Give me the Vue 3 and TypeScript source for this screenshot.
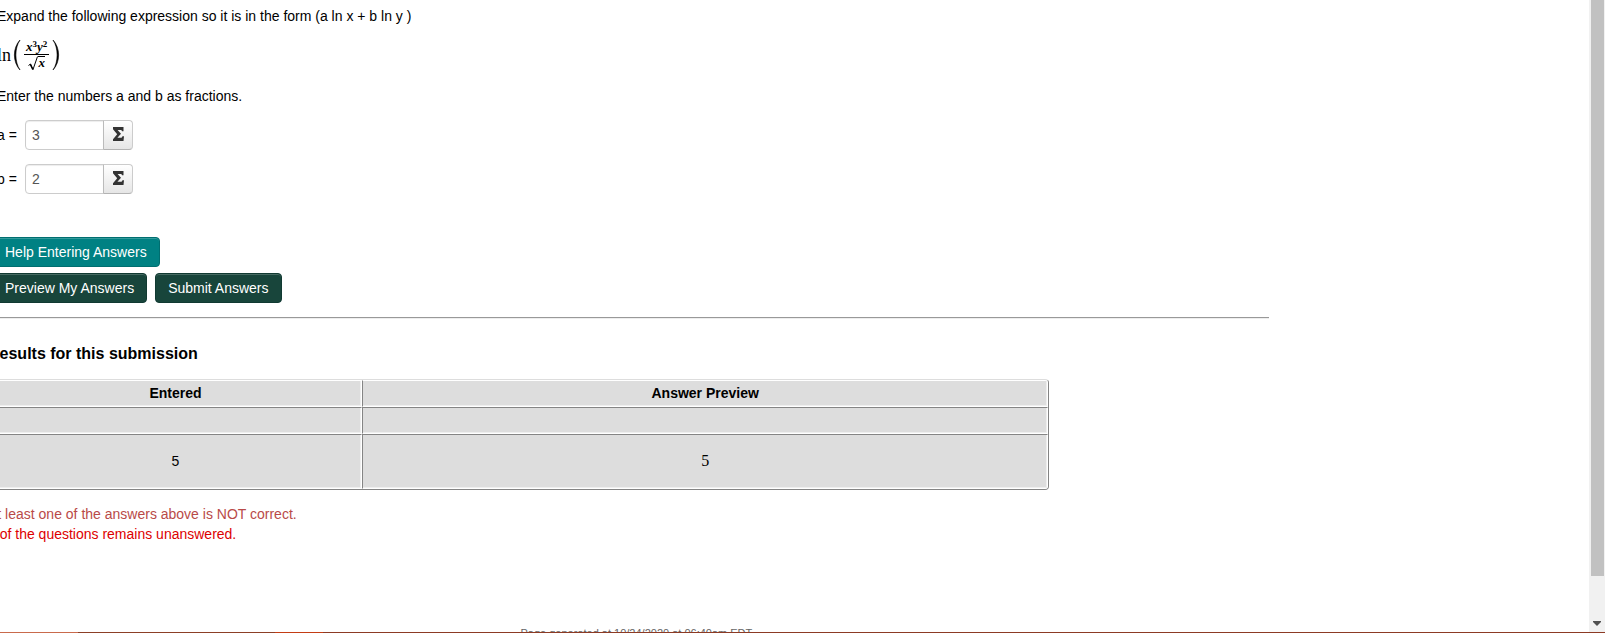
<script setup lang="ts">
import { ref } from 'vue'

interface Blank { id: string; label: string }
const blanks: Blank[] = [
  { id: 'a', label: 'a =' },
  { id: 'b', label: 'b =' },
]
const values = ref<Record<string, string>>({ a: '3', b: '2' })
const rows = [
  { entered: '', preview: '', tall: false },
  { entered: '5', preview: '5', tall: true },
]
</script>

<template>
  <div class="window">
    <div class="view">
      <main class="page">
        <form class="problem" @submit.prevent>
          <p class="line">Expand the following expression so it is in the form (a ln x + b ln y )</p>
          <div class="formula">
            <span class="fn">ln</span>
            <svg class="paren" width="8" height="32" viewBox="0 0 8 32"><path d="M7 1C-.5 9-.5 23 7 31C1.500 23 1.500 9 7 1Z" fill="#000" stroke="#000" stroke-width=".6" /></svg>
            <span class="frac">
              <span class="num"><i>x</i><sup>3</sup><i>y</i><sup>2</sup></span>
              <span class="den">
                <svg width="10" height="15" viewBox="0 0 10 15"><path d="M.5 9.500L2.500 8L5 13.500L9.500 .5" fill="none" stroke="#000" /><path d="M2.300 8.300L4.800 13.500" stroke="#000" stroke-width="1.500" /></svg>
                <i class="root">x</i>
              </span>
            </span>
            <svg class="paren" width="8" height="32" viewBox="0 0 8 32"><path d="M1 1C8.500 9 8.500 23 1 31C6.500 23 6.500 9 1 1Z" fill="#000" stroke="#000" stroke-width=".6" /></svg>
          </div>
          <p class="line">Enter the numbers a and b as fractions.</p>
          <div v-for="b in blanks" :key="b.id" class="blank">
            <label :for="b.id">{{ b.label }}</label>
            <input :id="b.id" v-model="values[b.id]" type="text" />
            <button type="button" class="sigma" aria-label="Equation editor">
              <svg width="11" height="14" viewBox="0 0 11 14"><path d="M0 0H10.500V4.200H9C8.800 3.200 8.400 2.900 7.500 2.900H4.600L8 6.700L4.400 10.800H7.700C8.700 10.800 9.100 10.400 9.400 9.300H11L10.500 14H0V12.300L4.200 7.300L0 2.200Z" fill="#333" /></svg>
            </button>
          </div>
          <div class="actions">
            <a class="btn help" href="#">Help Entering Answers</a>
            <div class="pair">
              <button type="submit" class="btn">Preview My Answers</button>
              <button type="submit" class="btn">Submit Answers</button>
            </div>
          </div>
        </form>
        <hr />
        <h3>Results for this submission</h3>
        <table>
          <thead><tr><th class="first">Entered</th><th>Answer Preview</th></tr></thead>
          <tbody>
            <tr v-for="(r, i) in rows" :key="i" :class="{ tall: r.tall }">
              <td>{{ r.entered }}</td>
              <td class="math">{{ r.preview }}</td>
            </tr>
          </tbody>
        </table>
        <p class="note wrong">At least one of the answers above is NOT correct.</p>
        <p class="note missing">1 of the questions remains unanswered.</p>
        <footer>Page generated at 10/24/2020 at 06:40am EDT</footer>
      </main>
      <div class="scrollbar">
        <div class="thumb"></div>
        <svg width="8" height="5" viewBox="0 0 8 5"><path d="M0 0H8V1L4 5L0 1Z" fill="#505050" /></svg>
      </div>
    </div>
    <div class="edge"></div>
  </div>
</template>

<style>
body { margin: 0; overflow: hidden; background: #fff; }
</style>

<style scoped>
* { box-sizing: border-box; }
.window { height: 100vh; display: flex; flex-direction: column; overflow: hidden; font: 14px/20px "Liberation Sans", Arial, sans-serif; color: #000; }
.view { flex: 1; min-height: 0; display: flex; overflow: hidden; }
.page { flex: 1; min-width: 0; margin-left: -12px; padding-top: 6px; }
.edge { height: 1px; flex: none; background: linear-gradient(90deg, #c96a4c 0 78px, #8c3f26 78px 275px, #c43d14 275px 323px, #8c3a24 323px); }
p { margin: 0; }
.problem { padding-left: 9px; }
.formula { display: flex; align-items: center; height: 40px; margin: 9px 0 11px; font-family: "Liberation Serif", "Times New Roman", serif; }
.fn { font-size: 18px; line-height: 32px; padding-right: 2px; }
.frac { display: flex; flex-direction: column; align-items: center; margin: 0 3px; font-size: 13px; font-weight: 700; }
.num { line-height: 14px; height: 15px; padding: 0 2px; border-bottom: 1px solid #000; white-space: nowrap; }
sup { font-size: 9px; line-height: 0; vertical-align: 4px; }
.den { display: flex; height: 16px; align-items: flex-start; padding-top: 1px; }
.root { border-top: 1px solid #000; line-height: 12px; }
.blank { display: flex; align-items: center; height: 30px; margin: 14px 0; }
.blank label { width: 28px; }
.blank input { width: 79px; height: 30px; padding: 4px 6px; border: 1px solid #ccc; border-radius: 4px 0 0 4px; font: 14px/20px "Liberation Sans", Arial, sans-serif; color: #555; outline: none; box-shadow: inset 0 1px 1px rgba(0, 0, 0, .075); }
.sigma { display: flex; align-items: center; justify-content: center; width: 30px; height: 30px; margin-left: -1px; padding: 0 0 2px; border: 1px solid #bbb; border-color: #ccc #ccc #b3b3b3 #bbb; border-radius: 0 4px 4px 0; background: linear-gradient(#fff, #e6e6e6); }
.actions { margin: 43px 0 0 -5px; display: flex; flex-direction: column; align-items: flex-start; gap: 6px; }
.pair { display: flex; gap: 8px; }
.btn { display: block; height: 30px; padding: 4px 12px; border: 1px solid #113a32; border-radius: 4px; background: #18453b; color: #fff; font: 14px/20px "Liberation Sans", Arial, sans-serif; text-decoration: none; white-space: nowrap; box-shadow: inset 0 1px 0 rgba(255, 255, 255, .2); }
.help { background: #008183; border-color: #006e70; }
hr { width: 80%; margin: 14px 0 0; border: 0; border-top: 1px solid #999; border-bottom: 1px solid #eee; }
h3 { margin: 25px 0 15px; font-size: 16px; line-height: 20px; }
table { width: 66.3%; margin: 0; border: 1px solid; border-color: #ddd #848484 #848484 #ddd; border-radius: 4px; border-spacing: 0; table-layout: fixed; background: #ddd; overflow: hidden; }
th, td { height: 27px; padding: 0 0 2px; text-align: center; vertical-align: middle; border: 1px solid; border-color: #848484 #fff #fff #848484; box-shadow: inset -1px -1px 0 #eee; }
th { border-top-color: #fff; font-weight: 700; }
.first { width: 35.2%; }
.tall td { height: 55px; }
.math { font-family: "Liberation Serif", "Times New Roman", serif; font-size: 16px; }
.note.wrong { margin-top: 14px; color: #b94a48; }
.missing { color: #d00; }
footer { width: 81%; margin-top: 79px; text-align: center; font-size: 11px; line-height: 20px; color: #666; }
.scrollbar { width: 16px; flex: none; display: flex; flex-direction: column; align-items: center; justify-content: space-between; padding-bottom: 6px; background: #f1f1f1; }
.thumb { width: 13px; height: 92%; background: #c1c1c1; }
</style>
